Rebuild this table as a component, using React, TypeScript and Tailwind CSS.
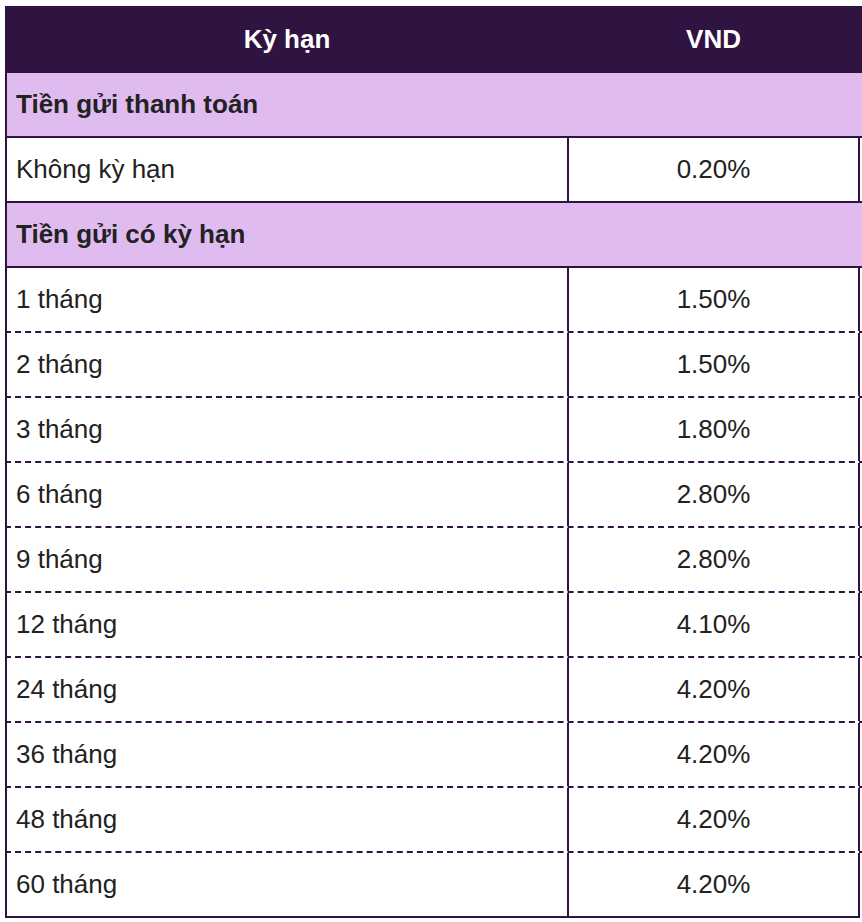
import React from "react";

const rows: [string, string][] = [
  ["1 tháng", "1.50%"],
  ["2 tháng", "1.50%"],
  ["3 tháng", "1.80%"],
  ["6 tháng", "2.80%"],
  ["9 tháng", "2.80%"],
  ["12 tháng", "4.10%"],
  ["24 tháng", "4.20%"],
  ["36 tháng", "4.20%"],
  ["48 tháng", "4.20%"],
  ["60 tháng", "4.20%"],
];

function Section({ title }: { title: string }) {
  return (
    <div className="h-[65px] w-[870px] bg-[#e0bbf0] border-l-2 border-b-2 border-solid border-[#2f1442] flex items-center pl-[9px] font-bold text-[26px] text-[#222222]">
      {title}
    </div>
  );
}

function DataRow({ label, value, dashed, last }: { label: string; value: string; dashed?: boolean; last?: boolean }) {
  return (
    <div
      className={
        "h-[65px] flex border-l-2 border-b-2 border-solid border-[#2f1442] " +
        (dashed ? "[border-bottom-style:dashed] " : "") +
        (last ? "w-[855px]" : "w-[870px]")
      }
    >
      <div className="w-[560px] flex items-center pl-[9px] text-[26px] text-[#222222]">{label}</div>
      <div className="w-[293px] border-l-2 border-r-2 border-solid border-[#2f1442] flex items-center justify-center text-[26px] text-[#222222]">
        {value}
      </div>
    </div>
  );
}

export default function App() {
  return (
    <div
      className="w-[862px] h-[922px] overflow-hidden bg-white pt-[6px] pl-[5px]"
      style={{ fontFamily: '"Liberation Sans", Arial, sans-serif' }}
    >
      <div className="w-[870px]">
        <div className="h-[67px] w-[870px] bg-[#2f1442] flex text-white font-bold text-[26px]">
          <div className="w-[564px] flex items-center justify-center">Kỳ hạn</div>
          <div className="w-[289px] flex items-center justify-center">VND</div>
        </div>
        <Section title="Tiền gửi thanh toán" />
        <DataRow label="Không kỳ hạn" value="0.20%" />
        <Section title="Tiền gửi có kỳ hạn" />
        {rows.map(([l, v], i) => (
          <DataRow key={l} label={l} value={v} dashed={i < rows.length - 1} last={i === rows.length - 1} />
        ))}
      </div>
    </div>
  );
}
